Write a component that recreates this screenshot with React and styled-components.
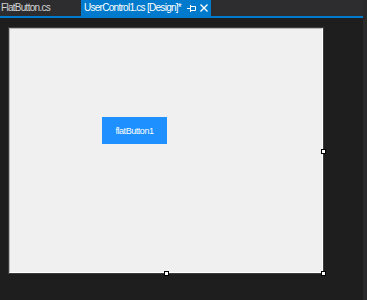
import React from "react";
import styled, { createGlobalStyle } from "styled-components";

const Global = createGlobalStyle`
  html, body { margin: 0; padding: 0; background: #1e1e1e; }
  body { width: 367px; height: 300px; overflow: hidden; font-family: "Liberation Sans", Arial, sans-serif; }
`;

const Window = styled.div`
  display: flex;
  width: 367px;
  height: 300px;
  background: #1e1e1e;
`;

const Main = styled.div`
  display: flex;
  flex-direction: column;
  width: 363px;
`;

const ScrollStrip = styled.div`
  width: 4px;
  background: #2a2a2c;
`;

const TabBar = styled.div`
  display: flex;
  align-items: stretch;
  height: 16px;
  background: #2d2d30;
  border-bottom: 2px solid #007acc;
`;

const Tab = styled.div`
  display: flex;
  align-items: center;
  padding: ${(p) => (p.$active ? "0 3px 0 3px" : "0 0 0 1px")};
  width: ${(p) => p.$width}px;
  box-sizing: border-box;
  background: ${(p) => (p.$active ? "#007acc" : "transparent")};
  color: ${(p) => (p.$active ? "#ffffff" : "#d4d4d4")};
  font-size: 10px;
  letter-spacing: -0.72px;
  line-height: 16px;
  white-space: nowrap;
`;

const TabLabel = styled.span`
  flex: none;
  width: ${(p) => p.$w}px;
`;

const TabIcon = styled.svg`
  display: block;
  flex: none;
  margin-left: ${(p) => p.$gap}px;
`;

const Content = styled.div`
  flex: 1;
  padding: 10px 0 0 9px;
`;

const Surface = styled.div`
  position: relative;
  width: 314px;
  height: 245px;
  box-sizing: border-box;
  background: #f0f0f0;
  border: 1px solid #b8b8b8;
  border-right-color: #ffffff;
  border-bottom-color: #ffffff;
  box-shadow: 0 0 0 1px #3c3c3f;
  display: flex;
  padding: 88px 0 0 92px;
`;

const FlatButton = styled.div`
  width: 65px;
  height: 27px;
  background: #1e90ff;
  color: #ffffff;
  font-size: 9px;
  letter-spacing: -0.45px;
  display: flex;
  align-items: center;
  justify-content: center;
`;

const Handle = styled.div`
  position: absolute;
  width: 5px;
  height: 5px;
  box-sizing: border-box;
  background: #ffffff;
  border: 1px solid #000000;
  left: ${(p) => p.$x}px;
  top: ${(p) => p.$y}px;
`;

export default function App() {
  return (
    <>
      <Global />
      <Window>
        <Main>
          <TabBar>
            <Tab $width={81}>
              <TabLabel $w={80}>FlatButton.cs</TabLabel>
            </Tab>
            <Tab $active $width={130}>
              <TabLabel $w={97}>UserControl1.cs [Design]*</TabLabel>
              <TabIcon $gap={6} width="9" height="8" viewBox="0 0 9 8">
                <path d="M0 4.5 H3 M3.5 1 V8 M3.5 2.5 H8.5 V6.5 H3.5" stroke="#ffffff" strokeWidth="1" fill="none" />
              </TabIcon>
              <TabIcon $gap={4} width="8" height="8" viewBox="0 0 8 8">
                <path d="M0.5 0.5 L7.5 7.5 M7.5 0.5 L0.5 7.5" stroke="#ffffff" strokeWidth="1.4" fill="none" />
              </TabIcon>
            </Tab>
          </TabBar>
          <Content>
            <Surface>
              <FlatButton>flatButton1</FlatButton>
              <Handle $x={311} $y={120} />
              <Handle $x={154} $y={242} />
              <Handle $x={311} $y={242} />
            </Surface>
          </Content>
        </Main>
        <ScrollStrip />
      </Window>
    </>
  );
}
